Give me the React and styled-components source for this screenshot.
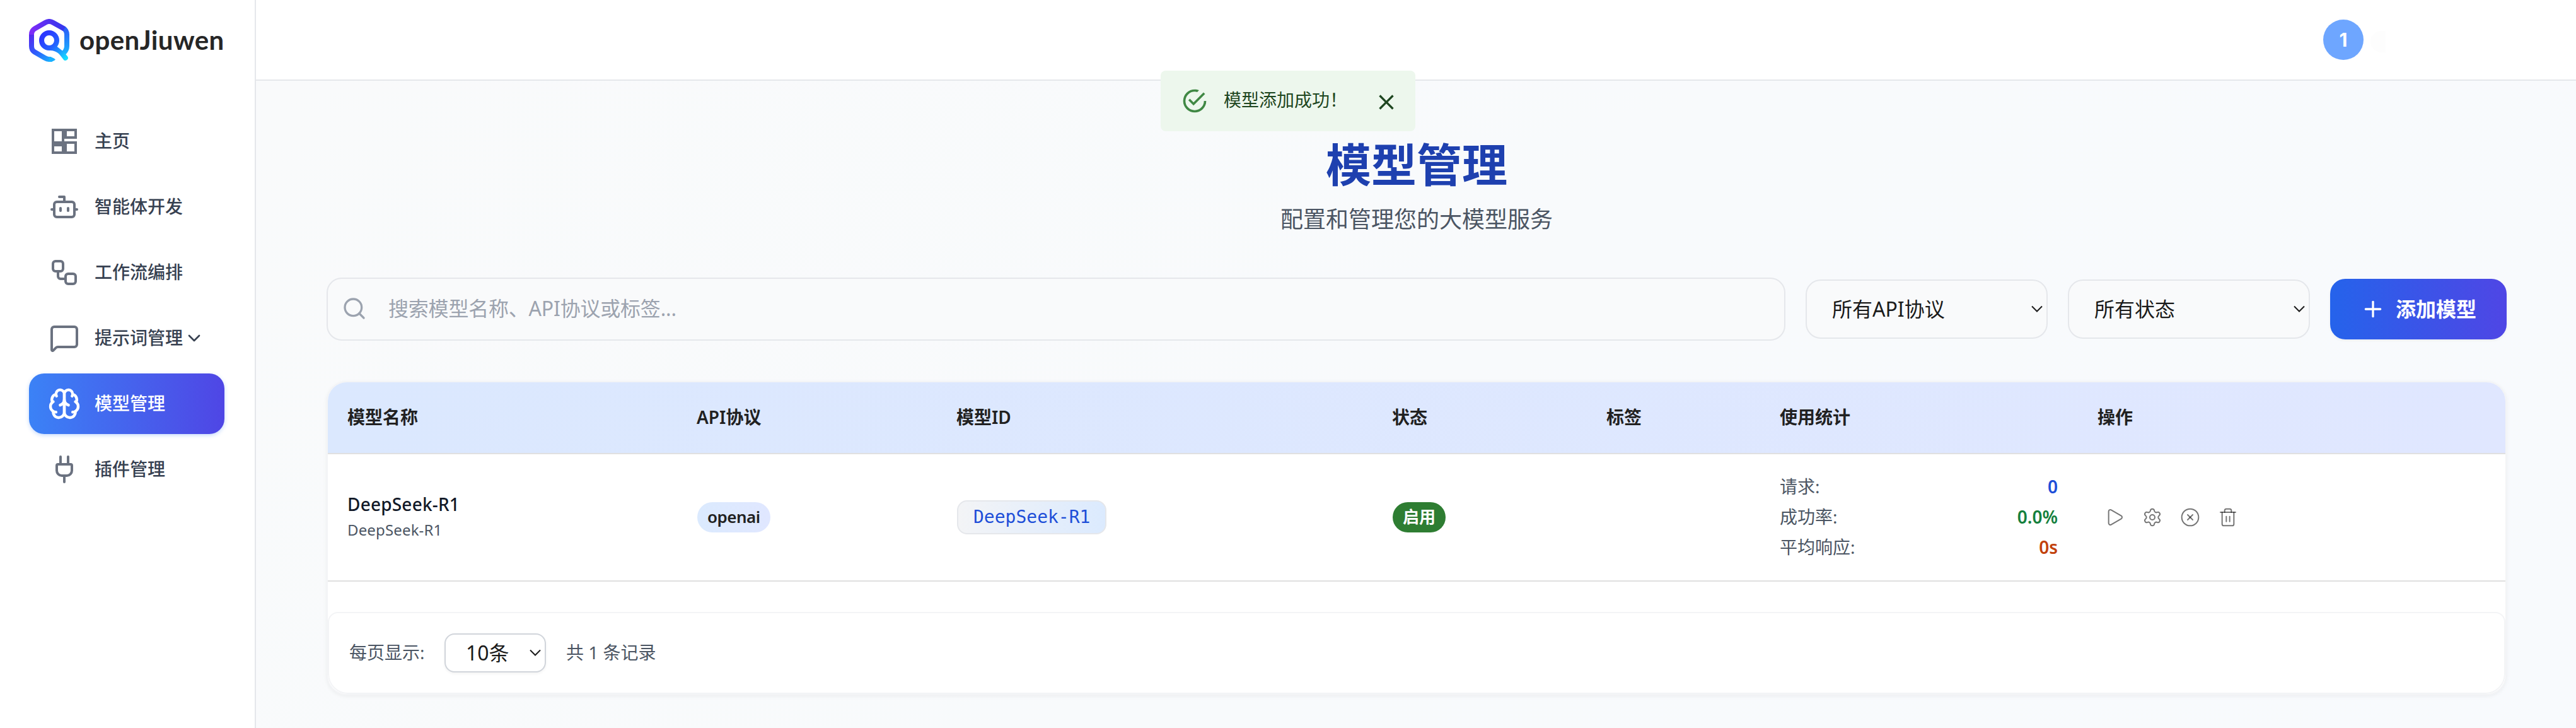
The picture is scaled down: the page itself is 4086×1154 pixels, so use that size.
import React from 'react';
import styled, { createGlobalStyle } from 'styled-components';
import {
  Bot, Workflow, MessageSquare, Plug, ChevronDown,
  Search, Plus, Play, Settings, CircleX, Trash2,
} from 'lucide-react';

const GlobalStyle = createGlobalStyle`
  *, *::before, *::after { box-sizing: border-box; }
  body {
    margin: 0;
    font-family: "Noto Sans", "Noto Sans CJK SC", sans-serif;
    color: #212121;
    background: #fff;
  }
  svg { display: block; flex: none; }
`;

const Page = styled.div`
  display: flex;
  width: 100%;
  height: 1154px;
  overflow: hidden;
`;

/* ---------- sidebar ---------- */
const Sidebar = styled.aside`
  width: 406px;
  flex: none;
  border-right: 2px solid #e5e7eb;
  background: #fff;
`;
const Brand = styled.div`
  display: flex;
  align-items: center;
  gap: 16px;
  height: 128px;
  padding-left: 46px;
`;
const BrandName = styled.span`
  font-family: Lato, "Noto Sans", sans-serif;
  font-weight: 700;
  font-size: 42px;
  line-height: 52px;
  letter-spacing: 0.4px;
  color: #262626;
  margin-top: -2px;
`;
const Nav = styled.nav`
  display: flex;
  flex-direction: column;
  gap: 8px;
  padding: 48px 48px 0 46px;
`;
const NavItem = styled.a`
  display: flex;
  align-items: center;
  height: 96px;
  padding-left: 32px;
  border-radius: 24px;
  font-size: 28px;
  font-weight: 500;
  line-height: 40px;
  color: ${(p) => (p.$active ? '#fff' : '#374151')};
  background: ${(p) => (p.$active ? 'linear-gradient(90deg, #3b82f6, #4f46e5)' : 'none')};
  box-shadow: ${(p) => (p.$active ? '0 2px 6px rgba(59, 130, 246, 0.3)' : 'none')};
`;
const NavIcon = styled.span`
  margin-right: 24px;
  color: ${(p) => (p.$active ? '#fff' : '#6b7280')};
  transform: ${(p) => (p.$active ? 'scale(1.1)' : 'none')};
`;
const NavLabel = styled.span`
  padding-bottom: 3px;
  margin-right: 2px;
`;

/* ---------- main ---------- */
const Main = styled.div`
  flex: 1;
  min-width: 0;
  display: flex;
  flex-direction: column;
`;
const TopBar = styled.header`
  display: flex;
  justify-content: flex-end;
  align-items: center;
  gap: 11px;
  height: 128px;
  padding: 0 302px 0 0;
  background: #fff;
  border-bottom: 2px solid #e5e7eb;
`;
const Avatar = styled.div`
  display: grid;
  place-items: center;
  width: 64px;
  height: 64px;
  border-radius: 50%;
  background: #6ea6ff;
  color: #fff;
  font-family: Inter, "Noto Sans", sans-serif;
  font-size: 30px;
  font-weight: 700;
  line-height: 1;
`;
const AvatarEdge = styled.div`
  width: 24px;
  height: 34px;
  margin-top: 6px;
  border-radius: 17px 0 0 17px;
  background: #fdfdfd;
`;
const Content = styled.main`
  flex: 1;
  padding: 90px 110px 0 112px;
  background: linear-gradient(135deg, #f9fafb 0%, #f8fafc 50%, #f8fafd 100%);
`;
const Title = styled.h1`
  margin: 0;
  text-align: center;
  font-size: 72px;
  font-weight: 700;
  line-height: 84px;
  color: #1e40af;
`;
const Subtitle = styled.p`
  margin: 18px 0 0;
  text-align: center;
  font-size: 36px;
  line-height: 56px;
  color: #4b5563;
`;
const Toolbar = styled.div`
  display: flex;
  align-items: center;
  gap: 32px;
  height: 100px;
  margin: 64px 0 64px;
`;
const SearchBox = styled.div`
  flex: 1;
  display: flex;
  align-items: center;
  gap: 34px;
  height: 100px;
  padding: 0 22px 2px;
  border: 2px solid #e5e7eb;
  border-radius: 24px;
  background: #f9fafb;
  color: #9ca3af;
  font-size: 32px;
  line-height: 48px;
  letter-spacing: -0.2px;
`;
const SelectBox = styled.div`
  display: flex;
  align-items: center;
  justify-content: space-between;
  width: ${(p) => p.$w}px;
  height: ${(p) => p.$h}px;
  padding: ${(p) => p.$pad};
  border: 2px solid ${(p) => p.$line || '#e5e7eb'};
  border-radius: ${(p) => p.$r}px;
  background: ${(p) => p.$bg || '#f9fafb'};
  box-shadow: ${(p) => (p.$raised ? '0 2px 4px rgba(0, 0, 0, 0.05)' : 'none')};
  font-size: 32px;
  line-height: 48px;
  color: #1a1a1a;
`;
const AddButton = styled.button`
  display: flex;
  align-items: center;
  gap: 16px;
  height: 96px;
  padding: 0 48px;
  border: 0;
  border-radius: 24px;
  background: linear-gradient(90deg, #2563eb, #4f46e5);
  box-shadow: 0 2px 4px rgba(0, 0, 0, 0.05);
  color: #fff;
  font: 600 32px/48px "Noto Sans", "Noto Sans CJK SC", sans-serif;
`;

/* ---------- table ---------- */
const Card = styled.section`
  border: 2px solid #f3f4f6;
  border-radius: 32px;
  background: #fff;
  box-shadow: 0 2px 6px rgba(0, 0, 0, 0.05);
  overflow: hidden;
`;
const Row = styled.div`
  display: grid;
  grid-template-columns: 554px 412px 691px 340px 275px 504px 1fr;
  align-items: center;
  border-bottom: 2px solid #e0e0e0;
`;
const HeadRow = styled(Row)`
  height: 114px;
  padding-bottom: 3px;
  background: linear-gradient(90deg, #dbe8fe, #e0e7ff);
  font-size: 28px;
  font-weight: 600;
  line-height: 48px;
`;
const BodyRow = styled(Row)`
  height: 202px;
  margin-bottom: 48px;
`;
const Cell = styled.div`
  padding: 0 32px 0 31px;
`;
const ModelName = styled.div`
  font-size: 28px;
  font-weight: 500;
  line-height: 40px;
  letter-spacing: 0.2px;
  color: #111827;
`;
const ModelDesc = styled.div`
  margin: 5px 0 5px;
  font-size: 24px;
  line-height: 32px;
  letter-spacing: 0.15px;
  color: #4b5563;
`;
const Chip = styled.span`
  display: inline-flex;
  align-items: center;
  height: 48px;
  padding: 0 16px 2px;
  margin-left: 1px;
  border-radius: 24px;
  font-size: 26px;
  font-weight: 600;
  line-height: 36px;
  letter-spacing: ${(p) => (p.$solid ? '0' : '-0.5px')};
  vertical-align: middle;
  color: ${(p) => (p.$solid ? '#fff' : '#212121')};
  background: ${(p) => (p.$solid ? '#2e7d32' : 'linear-gradient(90deg, #dbeafe, #e0e7ff)')};
`;
const ModelId = styled.code`
  display: inline-flex;
  align-items: center;
  height: 54px;
  padding: 0 24px;
  margin-left: 1px;
  border: 2px solid #e5e7eb;
  border-radius: 16px;
  background: linear-gradient(90deg, #f3f4f6, #dbeafe);
  font-family: "DejaVu Sans Mono", monospace;
  font-size: 28px;
  line-height: 40px;
  vertical-align: middle;
  color: #1d4ed8;
`;
const StatList = styled.div`
  display: grid;
  gap: 8px;
  padding-bottom: 3px;
`;
const Stat = styled.div`
  display: flex;
  justify-content: space-between;
  font-size: 28px;
  line-height: 40px;
  color: #4b5563;
`;
const StatValue = styled.b`
  font-weight: 600;
  color: ${(p) => p.$color};
`;
const Actions = styled.div`
  display: flex;
  gap: 28px;
  padding-left: 11px;
  color: rgba(0, 0, 0, 0.54);
`;
const Pagination = styled.footer`
  display: flex;
  align-items: center;
  gap: 32px;
  height: 130px;
  padding: 0 32px;
  border: 2px solid #f3f4f6;
  border-radius: 16px 16px 32px 32px;
  font-size: 28px;
  line-height: 40px;
  color: #4b5563;
`;
const PageText = styled.span`
  width: ${(p) => (p.$w ? `${p.$w}px` : 'auto')};
  padding-bottom: 2px;
  white-space: nowrap;
`;

/* ---------- toast ---------- */
const Toast = styled.div`
  position: fixed;
  top: 112px;
  left: 50%;
  transform: translateX(-50%);
  display: flex;
  align-items: flex-start;
  width: 404px;
  height: 96px;
  padding: 26px 26px 0 32px;
  border-radius: 8px;
  background: #edf7ed;
  color: #1e4620;
  font-size: 28px;
  line-height: 40px;
`;
const ToastText = styled.span`
  flex: 1;
  margin: 0 0 0 24px;
  white-space: nowrap;
`;
const CloseIcon = styled.svg`
  margin-top: 4px;
`;

function Logo() {
  return (
    <svg width="64" height="68" viewBox="46 30 64 68" fill="none">
      <defs>
        <linearGradient id="lgTop" gradientUnits="userSpaceOnUse" x1="50" y1="50" x2="104" y2="44">
          <stop offset="0" stopColor="#7d2cf8" /><stop offset="0.5" stopColor="#5430f0" /><stop offset="1" stopColor="#3238ee" />
        </linearGradient>
        <linearGradient id="lgLeft" gradientUnits="userSpaceOnUse" x1="50" y1="54" x2="84" y2="96">
          <stop offset="0" stopColor="#5528ee" /><stop offset="0.5" stopColor="#2f5cfb" /><stop offset="1" stopColor="#18b4ff" />
        </linearGradient>
        <linearGradient id="lgRight" gradientUnits="userSpaceOnUse" x1="104" y1="44" x2="104" y2="84">
          <stop offset="0" stopColor="#2a5cf8" /><stop offset="1" stopColor="#1cb2ff" />
        </linearGradient>
        <linearGradient id="lgQ" gradientUnits="userSpaceOnUse" x1="70" y1="56" x2="106" y2="92">
          <stop offset="0" stopColor="#2c38ff" /><stop offset="0.45" stopColor="#2463ff" /><stop offset="1" stopColor="#14e0ff" />
        </linearGradient>
      </defs>
      <path d="M106 54V73Q106 79 101.500 83.500" stroke="url(#lgRight)" strokeWidth="8" />
      <path d="M101 45Q106 48.500 106 55" stroke="url(#lgRight)" strokeWidth="8" />
      <path d="M50 54V73Q50 79.500 55 82.500L71 91.700Q77 95 82 93.800" stroke="url(#lgLeft)" strokeWidth="8" />
      <path d="M78 90C81 90 85 91.500 88 94.500C85 97.500 80 98 77 98Z" fill="#18b0ff" />
      <path d="M50 55Q50 48.500 55 45.500L72 35.700Q78 32.300 84 35.700L102 45.800" stroke="url(#lgTop)" strokeWidth="8" />
      <circle cx="78" cy="64" r="12" stroke="url(#lgQ)" strokeWidth="8" />
      <path d="M77 79.800C86 79.800 92 82.500 96.500 89L100.500 94.200A4 4 0 0 0 107 89.300L101 82L90 73.500Z" fill="url(#lgQ)" />
    </svg>
  );
}

function DashboardIcon() {
  return (
    <svg width="48" height="48" viewBox="0 0 24 24" fill="none" stroke="currentColor" strokeWidth="2">
      <rect x="3" y="3" width="8" height="10" />
      <rect x="13" y="3" width="8" height="6" />
      <rect x="3" y="15" width="8" height="6" />
      <rect x="13" y="13" width="8" height="8" />
    </svg>
  );
}

function BrainIcon() {
  return (
    <svg width="48" height="48" viewBox="0 0 24 24" overflow="visible" fill="none" stroke="currentColor" strokeWidth="2" strokeLinecap="round" strokeLinejoin="round">
      <path d="M12 5a3 3 0 1 0-5.997.125 4 4 0 0 0-2.526 5.770 4 4 0 0 0 .556 6.588A4 4 0 1 0 12 18Z" />
      <path d="M12 5a3 3 0 1 1 5.997.125 4 4 0 0 1 2.526 5.770 4 4 0 0 1-.556 6.588A4 4 0 1 1 12 18Z" />
      <path d="M15 13a4.500 4.500 0 0 1-3-4 4.500 4.500 0 0 1-3 4" />
      <path d="M17.599 6.500a3 3 0 0 0 .399-1.375" />
      <path d="M6.003 5.125A3 3 0 0 0 6.401 6.500" />
      <path d="M3.477 10.896a4 4 0 0 1 .585-.396" />
      <path d="M19.938 10.500a4 4 0 0 1 .585.396" />
      <path d="M6 18a4 4 0 0 1-1.967-.516" />
      <path d="M19.967 17.484A4 4 0 0 1 18 18" />
    </svg>
  );
}

function Caret() {
  return (
    <svg width="18" height="12" viewBox="0 0 18 12" fill="none" stroke="#1a1a1a" strokeWidth="2">
      <path d="M1 1.500L9 9.500L17 1.500" />
    </svg>
  );
}

const NAV = [
  { label: '主页', icon: DashboardIcon },
  { label: '智能体开发', icon: Bot },
  { label: '工作流编排', icon: Workflow },
  { label: '提示词管理', icon: MessageSquare, more: true },
  { label: '模型管理', icon: BrainIcon, active: true },
  { label: '插件管理', icon: Plug },
];
const COLUMNS = ['模型名称', 'API协议', '模型ID', '状态', '标签', '使用统计', '操作'];
const STATS = [
  ['请求:', '0', '#1d4ed8'],
  ['成功率:', '0.0%', '#15803d'],
  ['平均响应:', '0s', '#c2410c'],
];

export default function App() {
  return (
    <Page>
      <GlobalStyle />
      <Sidebar>
        <Brand>
          <Logo />
          <BrandName>openJiuwen</BrandName>
        </Brand>
        <Nav>
          {NAV.map(({ label, icon: Icon, active, more }) => (
            <NavItem key={label} $active={active}>
              <NavIcon $active={active}><Icon size={48} /></NavIcon>
              <NavLabel>{label}</NavLabel>
              {more && <ChevronDown size={32} />}
            </NavItem>
          ))}
        </Nav>
      </Sidebar>

      <Main>
        <TopBar>
          <Avatar>1</Avatar>
          <AvatarEdge />
        </TopBar>
        <Content>
          <Title>模型管理</Title>
          <Subtitle>配置和管理您的大模型服务</Subtitle>
          <Toolbar>
            <SearchBox>
              <Search size={40} />
              <span>搜索模型名称、API协议或标签...</span>
            </SearchBox>
            <SelectBox $w={384} $h={94} $r={24} $pad="0 6px 0 40px">所有API协议<Caret /></SelectBox>
            <SelectBox $w={384} $h={94} $r={24} $pad="0 6px 0 40px">所有状态<Caret /></SelectBox>
            <AddButton><Plus size={40} />添加模型</AddButton>
          </Toolbar>
          <Card>
            <HeadRow>
              {COLUMNS.map((c) => <Cell key={c}>{c}</Cell>)}
            </HeadRow>
            <BodyRow>
              <Cell>
                <ModelName>DeepSeek-R1</ModelName>
                <ModelDesc>DeepSeek-R1</ModelDesc>
              </Cell>
              <Cell><Chip>openai</Chip></Cell>
              <Cell><ModelId>DeepSeek-R1</ModelId></Cell>
              <Cell><Chip $solid>启用</Chip></Cell>
              <Cell />
              <Cell>
                <StatList>
                  {STATS.map(([label, value, color]) => (
                    <Stat key={label}>{label}<StatValue $color={color}>{value}</StatValue></Stat>
                  ))}
                </StatList>
              </Cell>
              <Cell>
                <Actions>
                  <Play size={32} strokeWidth={1.5} />
                  <Settings size={32} strokeWidth={1.5} />
                  <CircleX size={32} strokeWidth={1.5} />
                  <Trash2 size={32} strokeWidth={1.5} />
                </Actions>
              </Cell>
            </BodyRow>
            <Pagination>
              <PageText $w={119}>每页显示:</PageText>
              <SelectBox $w={161} $h={62} $r={16} $pad="0 6px 0 32px" $line="#d1d5db" $bg="#fff" $raised>10条<Caret /></SelectBox>
              <PageText>共 1 条记录</PageText>
            </Pagination>
          </Card>
        </Content>
      </Main>

      <Toast>
        <svg width="44" height="44" viewBox="0 0 24 24" fill="#2e7d32" opacity="0.9">
          <path d="M20,12A8,8 0 0,1 12,20A8,8 0 0,1 4,12A8,8 0 0,1 12,4C12.76,4 13.500,4.110 14.200,4.310L15.770,2.740C14.610,2.260 13.340,2 12,2A10,10 0 0,0 2,12A10,10 0 0,0 12,22A10,10 0 0,0 22,12M7.910,10.080L6.500,11.500L11,16L21,6L19.590,4.580L11,13.170L7.910,10.080Z" />
        </svg>
        <ToastText>模型添加成功！</ToastText>
        <CloseIcon width="40" height="40" viewBox="0 0 24 24" fill="currentColor">
          <path d="M19 6.410L17.590 5 12 10.590 6.410 5 5 6.410 10.590 12 5 17.590 6.410 19 12 13.410 17.590 19 19 17.590 13.410 12z" />
        </CloseIcon>
      </Toast>
    </Page>
  );
}
